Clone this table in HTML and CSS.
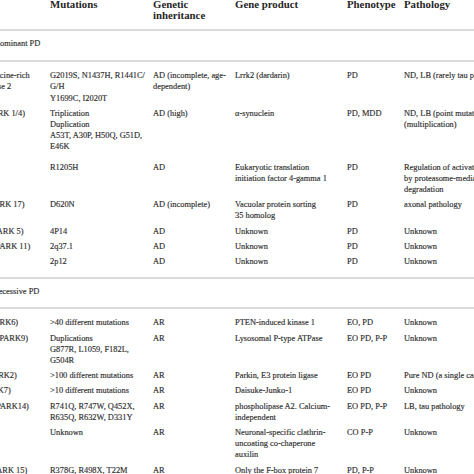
FILE: index.html
```html
<!DOCTYPE html>
<html lang="en">
<head>
<meta charset="utf-8">
<title>Genes associated with Parkinson's disease</title>
<link rel="stylesheet" href="styles.css">
</head>
<body>
<div class="frame">
  <table class="genes">
    <colgroup>
      <col class="c-gene"><col class="c-mut"><col class="c-inh"><col class="c-prod"><col class="c-phen"><col class="c-path">
    </colgroup>
    <thead>
      <tr><th>Gene</th><th>Mutations</th><th>Genetic inheritance</th><th>Gene product</th><th>Phenotype</th><th>Pathology</th></tr>
    </thead>
    <tbody>
      <tr class="section"><td colspan="6">Autosomal dominant PD</td></tr>
      <tr class="first">
        <td>LRRK2 leucine-rich repeat kinase 2</td>
        <td class="mut"><p>G2019S, N1437H, R1441C/<br>G/H</p><p>Y1699C, I2020T</p></td>
        <td class="inh">AD (incomplete, age-dependent)</td>
        <td class="prod">Lrrk2 (dardarin)</td>
        <td class="phen">PD</td>
        <td class="path">ND, LB (rarely tau pathology)</td>
      </tr>
      <tr class="tall">
        <td>SNCA (PARK 1/4)</td>
        <td class="mut"><p>Triplication</p><p>Duplication</p><p>A53T, A30P, H50Q, G51D,<br>E46K</p></td>
        <td class="inh">AD (high)</td>
        <td class="prod">α-synuclein</td>
        <td class="phen">PD, MDD</td>
        <td class="path">ND, LB (point mutations), LB (multiplication)</td>
      </tr>
      <tr>
        <td>EIF4G1</td>
        <td class="mut">R1205H</td>
        <td class="inh">AD</td>
        <td class="prod">Eukaryotic translation initiation factor 4-gamma 1</td>
        <td class="phen">PD</td>
        <td class="path">Regulation of activation<br>by proteasome-mediated<br>degradation</td>
      </tr>
      <tr>
        <td>VPS35 (PARK 17)</td>
        <td class="mut">D620N</td>
        <td class="inh">AD (incomplete)</td>
        <td class="prod">Vacuolar protein sorting<br>35 homolog</td>
        <td class="phen">PD</td>
        <td class="path">axonal pathology</td>
      </tr>
      <tr>
        <td>UCHL1 (PARK 5)</td>
        <td class="mut">4P14</td>
        <td class="inh">AD</td>
        <td class="prod">Unknown</td>
        <td class="phen">PD</td>
        <td class="path">Unknown</td>
      </tr>
      <tr>
        <td>GIGYF2 (PARK 11)</td>
        <td class="mut">2q37.1</td>
        <td class="inh">AD</td>
        <td class="prod">Unknown</td>
        <td class="phen">PD</td>
        <td class="path">Unknown</td>
      </tr>
      <tr class="last">
        <td>PARK3</td>
        <td class="mut">2p12</td>
        <td class="inh">AD</td>
        <td class="prod">Unknown</td>
        <td class="phen">PD</td>
        <td class="path">Unknown</td>
      </tr>
      <tr class="section"><td colspan="6">Autosomal recessive PD</td></tr>
      <tr class="first">
        <td>PINK1 (PARK6)</td>
        <td class="mut">&gt;40 different mutations</td>
        <td class="inh">AR</td>
        <td class="prod">PTEN-induced kinase 1</td>
        <td class="phen">EO, PD</td>
        <td class="path">Unknown</td>
      </tr>
      <tr>
        <td>ATP13A2 (PARK9)</td>
        <td class="mut"><p>Duplications</p><p>G877R, L1059, F182L,<br>G504R</p></td>
        <td class="inh">AR</td>
        <td class="prod">Lysosomal P-type ATPase</td>
        <td class="phen">EO PD, P-P</td>
        <td class="path">Unknown</td>
      </tr>
      <tr>
        <td>PRKN (PARK2)</td>
        <td class="mut">&gt;100 different mutations</td>
        <td class="inh">AR</td>
        <td class="prod">Parkin, E3 protein ligase</td>
        <td class="phen">EO PD</td>
        <td class="path">Pure ND (a single case)</td>
      </tr>
      <tr>
        <td>DJ-1 (PARK7)</td>
        <td class="mut">&gt;10 different mutations</td>
        <td class="inh">AR</td>
        <td class="prod">Daisuke-Junko-1</td>
        <td class="phen">EO PD</td>
        <td class="path">Unknown</td>
      </tr>
      <tr>
        <td>PLA2G6 (PARK14)</td>
        <td class="mut">R741Q, R747W, Q452X,<br>R635Q, R632W, D331Y</td>
        <td class="inh">AR</td>
        <td class="prod">phospholipase A2. Calcium-independent</td>
        <td class="phen">EO PD, P-P</td>
        <td class="path">LB, tau pathology</td>
      </tr>
      <tr>
        <td>DNAJC6</td>
        <td class="mut">Unknown</td>
        <td class="inh">AR</td>
        <td class="prod">Neuronal-specific clathrin-uncoating co-chaperone auxilin</td>
        <td class="phen">CO P-P</td>
        <td class="path">Unknown</td>
      </tr>
      <tr>
        <td>FBXO7 (PARK 15)</td>
        <td class="mut">R378G, R498X, T22M</td>
        <td class="inh">AR</td>
        <td class="prod">Only the F-box protein 7</td>
        <td class="phen">PD, P-P</td>
        <td class="path">Unknown</td>
      </tr>
    </tbody>
  </table>
</div>
</body>
</html>
```

FILE: styles.css
```css
* {
  box-sizing: border-box;
}

html,
body {
  margin: 0;
  padding: 0;
  background: #ffffff;
}

.frame {
  width: 474px;
  height: 474px;
  overflow: hidden;
}

.genes {
  margin: -1px 0 0 -45px;
  width: 565px;
  table-layout: fixed;
  border-collapse: separate;
  border-spacing: 0;
  font-family: "Liberation Serif", "Times New Roman", serif;
  font-size: 8.4px;
  line-height: 11.2px;
  color: #2e2e2e;
  -webkit-text-stroke: 0.15px #2e2e2e;
}

.c-gene { width: 89px; }
.c-mut { width: 103px; }
.c-inh { width: 82px; }
.c-prod { width: 112px; }
.c-phen { width: 57px; }
.c-path { width: 122px; }

.genes th {
  font-weight: bold;
  font-size: 10.8px;
  line-height: 11px;
  color: #262626;
  -webkit-text-stroke: 0;
  text-align: left;
  vertical-align: top;
  padding: 0 4px 8px 6px;
  border-bottom: 2px solid #dadada;
}

.genes td {
  text-align: left;
  vertical-align: top;
  padding: 2px 10px 2px 6px;
}

.genes td p {
  margin: 0;
}

.genes td.mut {
  white-space: nowrap;
  padding-right: 0;
}

.genes td.inh {
  padding-right: 0;
}

.genes td.prod {
  padding-right: 6px;
}

.genes td.phen {
  padding-right: 4px;
}

.genes td.path {
  padding-right: 0;
}

.genes .section td {
  padding: 7px 0 11px 2px;
  border-bottom: 2px solid #dadada;
}

.genes .section + .first td {
  padding-top: 8px;
}

.genes .last td {
  padding-bottom: 10px;
}

.genes .last + .section td {
  border-top: 2px solid #dadada;
  padding-top: 7px;
  padding-bottom: 10px;
}

.genes .tall td {
  padding-bottom: 7px;
}
```
